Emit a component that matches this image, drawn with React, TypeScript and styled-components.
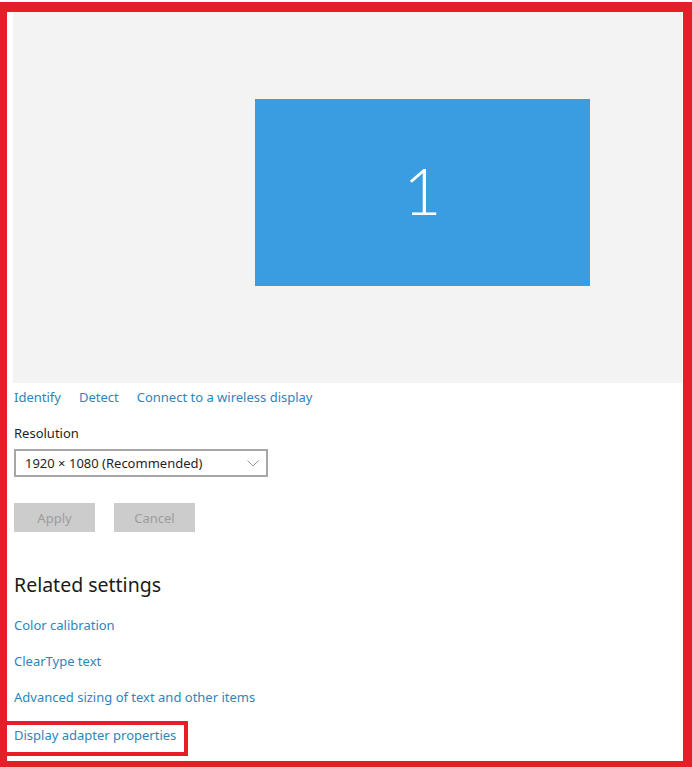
import styled, { createGlobalStyle } from "styled-components";

const GlobalStyle = createGlobalStyle`
  html, body {
    margin: 0;
    padding: 0;
    background: #ffffff;
  }
  body {
    font-family: "Noto Sans", "Open Sans", sans-serif;
  }
`;

// Red annotation frame round the whole settings page
const Frame = styled.div`
  box-sizing: border-box;
  width: 692px;
  height: 765px;
  margin-top: 2px;
  padding: 10px 9px 6px 7px;
  background: #e51f27;
`;

const Panel = styled.div`
  height: 100%;
  background: #ffffff;
  padding-left: 7px;
  box-sizing: border-box;
  display: flex;
  flex-direction: column;
  align-items: flex-start;
`;

// Display arrangement area
const Preview = styled.div`
  box-sizing: border-box;
  align-self: stretch;
  height: 371px;
  margin-left: -1px;
  margin-right: 1px;
  background: #f3f3f3;
  padding: 87px 0 0 242px;
`;

const Monitor = styled.div`
  box-sizing: border-box;
  width: 335px;
  height: 187px;
  padding-bottom: 6px;
  background: #3a9de1;
  display: flex;
  align-items: center;
  justify-content: center;
  color: #ffffff;
  font-family: Lato, "Noto Sans", sans-serif;
  font-weight: 300;
  font-size: 66px;
  line-height: 1;
`;

const LinkRow = styled.div`
  display: flex;
  gap: 18px;
  margin-top: 4px;
`;

const Link = styled.a`
  font-size: 13px;
  line-height: 20px;
  color: #3084b9;
  text-decoration: none;
  cursor: pointer;
  white-space: nowrap;
`;

const Label = styled.div`
  margin-top: 16px;
  font-size: 13px;
  line-height: 20px;
  color: #1f1f1f;
`;

const Select = styled.div`
  box-sizing: border-box;
  margin-top: 6px;
  width: 254px;
  height: 28px;
  border: 2px solid #a6a6a6;
  display: flex;
  align-items: center;
  justify-content: space-between;
  padding: 0 7px 0 9px;
  font-size: 13px;
  color: #1f1f1f;
`;

const ButtonRow = styled.div`
  display: flex;
  gap: 19px;
  margin-top: 26px;
`;

const Button = styled.button`
  width: 81px;
  height: 29px;
  border: none;
  background: #cccccc;
  color: #9c9c9c;
  font-family: inherit;
  font-size: 13px;
  padding: 0;
`;

const Heading = styled.h2`
  margin: 38px 0 0;
  font-size: 19.5px;
  line-height: 30px;
  font-weight: 400;
  color: #1a1a1a;
`;

const RelatedList = styled.div`
  display: flex;
  flex-direction: column;
  gap: 16px;
  margin-top: 15px;
`;

// Red annotation box round the highlighted link
const Highlight = styled.div`
  box-sizing: border-box;
  margin: -2px 0 0 -7px;
  width: 181px;
  height: 35px;
  border: 4px solid #e51f27;
  border-left: none;
  padding-left: 7px;
  display: flex;
  align-items: flex-start;
`;

const Chevron = () => (
  <svg width="12" height="7" viewBox="0 0 12 7" fill="none">
    <polyline points="0.5,0.5 6,6 11.5,0.5" stroke="#9a9a9a" strokeWidth="1" />
  </svg>
);

export default function App() {
  return (
    <>
      <GlobalStyle />
      <Frame>
        <Panel>
          <Preview>
            <Monitor>1</Monitor>
          </Preview>
          <LinkRow>
            <Link>Identify</Link>
            <Link>Detect</Link>
            <Link>Connect to a wireless display</Link>
          </LinkRow>
          <Label>Resolution</Label>
          <Select>
            <span>1920 × 1080 (Recommended)</span>
            <Chevron />
          </Select>
          <ButtonRow>
            <Button disabled>Apply</Button>
            <Button disabled>Cancel</Button>
          </ButtonRow>
          <Heading>Related settings</Heading>
          <RelatedList>
            <Link>Color calibration</Link>
            <Link>ClearType text</Link>
            <Link>Advanced sizing of text and other items</Link>
            <Highlight>
              <Link>Display adapter properties</Link>
            </Highlight>
          </RelatedList>
        </Panel>
      </Frame>
    </>
  );
}
